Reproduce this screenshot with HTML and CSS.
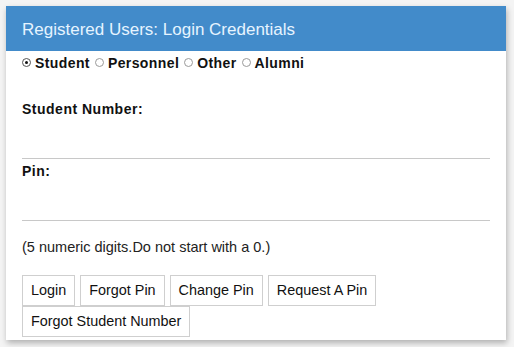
FILE: index.html
```html
<!DOCTYPE html>
<html>
<head>
<meta charset="utf-8">
<link rel="stylesheet" href="styles.css">
</head>
<body>
<div class="card">
  <div class="card-header">Registered Users: Login Credentials</div>
  <div class="card-body">
    <div class="radio-row">
      <label class="radio"><span class="dot checked"></span>Student</label>
      <label class="radio"><span class="dot"></span>Personnel</label>
      <label class="radio"><span class="dot"></span>Other</label>
      <label class="radio"><span class="dot"></span>Alumni</label>
    </div>
    <div class="field-label first">Student Number:</div>
    <div class="field-input"></div>
    <div class="field-label">Pin:</div>
    <div class="field-input"></div>
    <div class="help">(5 numeric digits.Do not start with a 0.)</div>
    <div class="buttons">
      <span class="btn">Login</span>
      <span class="btn">Forgot Pin</span>
      <span class="btn">Change Pin</span>
      <span class="btn">Request A Pin</span>
      <span class="btn">Forgot Student Number</span>
    </div>
  </div>
</div>
</body>
</html>
```
FILE: styles.css
```css
html, body {
  margin: 0;
  padding: 0;
}
body {
  background: #f4f4f4;
  width: 514px;
  height: 347px;
  overflow: hidden;
  font-family: "Liberation Sans", Arial, sans-serif;
  color: #111;
}
.card {
  margin: 6px 0 0 6px;
  width: 500px;
  height: 334px;
  background: #fff;
  box-shadow: 1px 3px 6px rgba(0, 0, 0, 0.28);
  display: flex;
  flex-direction: column;
}
.card-header {
  height: 45px;
  background: #428bca;
  color: #e6f4ff;
  font-size: 17px;
  line-height: 47px;
  padding-left: 16px;
}
.card-body {
  padding: 0 16px;
  display: flex;
  flex-direction: column;
}
.radio-row {
  height: 24px;
  display: flex;
  align-items: center;
  font-weight: bold;
  font-size: 14px;
  letter-spacing: 0.4px;
}
.radio {
  display: flex;
  align-items: center;
  margin-right: 5px;
}
.dot {
  border: 1px solid #9a9a9a;
  border-radius: 50%;
  box-sizing: border-box;
  width: 9px;
  height: 9px;
  margin-right: 4px;
  position: relative;
  top: -1px;
  background: #fff;
}
.dot.checked {
  border-color: #555;
}
.dot.checked::after {
  content: "";
  position: absolute;
  left: 2px;
  top: 2px;
  width: 3px;
  height: 3px;
  border-radius: 50%;
  background: #111;
}
.field-label {
  font-weight: bold;
  font-size: 14px;
  letter-spacing: 0.5px;
  line-height: 18px;
  margin-top: 3px;
}
.field-label.first {
  margin-top: 25px;
}
.field-input {
  height: 40px;
  border-bottom: 1px solid #c8c8c8;
}
.help {
  font-size: 14.5px;
  line-height: 18px;
  margin-top: 17px;
  color: #222;
}
.buttons {
  margin-top: 19px;
  display: flex;
  flex-wrap: wrap;
  column-gap: 5px;
  width: 370px;
}
.btn {
  height: 31px;
  box-sizing: border-box;
  border: 1px solid #cfcfcf;
  padding: 0 8px;
  font-size: 14.4px;
  line-height: 29px;
  color: #111;
  background: #fff;
}
```
